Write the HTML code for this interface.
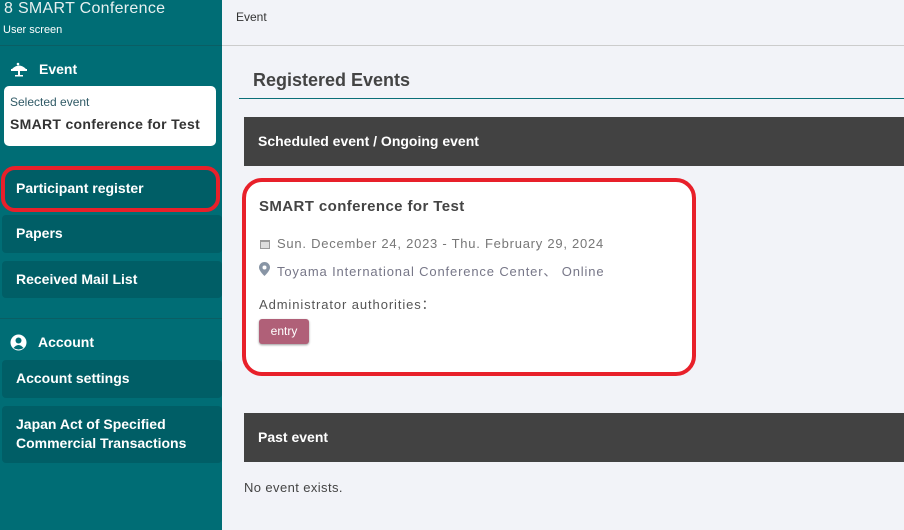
<!DOCTYPE html>
<html><head><meta charset="utf-8"><style>
*{box-sizing:border-box;margin:0;padding:0}
body{width:904px;height:530px;overflow:hidden;font-family:"Liberation Sans",sans-serif;background:#f2f3f8;position:relative}
.sb{position:absolute;left:0;top:0;width:222px;height:530px;background:#006d75;color:#fff}
.abs{position:absolute}
.item{position:absolute;left:2px;width:220px;background:#005e66;border-radius:4px;font-weight:bold;font-size:14px;padding-left:14px;color:#fff}
.main{position:absolute;left:222px;top:0;right:0;bottom:0}
.bar{position:absolute;left:22px;right:0;background:#424242;color:#fff;font-weight:bold;font-size:14px;padding-left:14px}
.card .t{letter-spacing:0.75px}
</style></head><body>
<div class="sb">
 <div class="abs" style="left:4px;top:0;font-size:16px;color:#e6f0f0;letter-spacing:0.3px">8 SMART Conference</div>
 <div class="abs" style="left:3px;top:24px;font-size:11px">User screen</div>
 <div class="abs" style="left:0;top:45px;width:222px;border-top:1px solid #0a5e64"></div>
 <svg class="abs" style="left:10px;top:61px" width="18" height="16" viewBox="0 0 18 16"><path d="M2 8 Q9 1 16 8Z" fill="#fff"/><rect x="1" y="8" width="16" height="2" fill="#fff"/><rect x="8" y="10" width="2" height="4" fill="#fff"/><rect x="5" y="14" width="8" height="1.5" fill="#fff"/><circle cx="8" cy="3" r="1.3" fill="#fff"/></svg>
 <div class="abs" style="left:39px;top:61px;font-size:14px;font-weight:bold">Event</div>
 <div class="abs" style="left:4px;top:86px;width:212px;height:60px;background:#fff;border-radius:5px;color:#2a4a55">
  <div style="position:absolute;left:6px;top:9px;font-size:12px;color:#305a66">Selected event</div>
  <div style="position:absolute;left:6px;top:30px;font-size:14px;font-weight:bold;color:#333;letter-spacing:0.3px">SMART conference for Test</div>
 </div>
 <div class="item" style="top:166px;height:46px;line-height:36px;border:4px solid #e8202a;border-radius:14px;left:1px;width:219px;padding-left:11px">Participant register</div>
 <div class="item" style="top:215px;height:38px;line-height:36px">Papers</div>
 <div class="item" style="top:261px;height:37px;line-height:36px">Received Mail List</div>
 <div class="abs" style="left:0;top:318px;width:222px;border-top:1px solid #0a5e64"></div>
 <svg class="abs" style="left:10px;top:334px" width="17" height="17" viewBox="0 0 17 17"><circle cx="8.5" cy="8.5" r="8" fill="#fff"/><circle cx="8.5" cy="6.5" r="3" fill="#006d75"/><path d="M3.5 14 Q8.5 8 13.5 14 Q8.5 17 3.5 14Z" fill="#006d75"/></svg>
 <div class="abs" style="left:38px;top:334px;font-size:14px;font-weight:bold">Account</div>
 <div class="item" style="top:360px;height:38px;line-height:36px">Account settings</div>
 <div class="item" style="top:406px;height:57px;padding-top:9px;line-height:19px">Japan Act of Specified<br>Commercial Transactions</div>
</div>
<div class="main">
 <div class="abs" style="left:14px;top:10px;font-size:12px;color:#333">Event</div>
 <div class="abs" style="left:0;top:45px;right:0;border-top:1px solid #ccc"></div>
 <div class="abs" style="left:31px;top:70px;font-size:18px;font-weight:bold;color:#444">Registered Events</div>
 <div class="abs" style="left:17px;top:98px;right:0;border-top:1px solid #0b6f78"></div>
 <div class="bar" style="top:117px;height:49px;line-height:49px">Scheduled event / Ongoing event</div>
 <div class="abs card" style="left:20px;top:178px;width:454px;height:198px;background:#fff;border:4px solid #e8202a;border-radius:20px">
  <div class="abs" style="left:13px;top:16px;font-size:15px;font-weight:bold;color:#444;letter-spacing:0.4px">SMART conference for Test</div>
  <svg class="abs" style="left:14px;top:57px" width="10" height="10"><rect x="0" y="1" width="10" height="9" fill="#999"/><rect x="1" y="3" width="8" height="6" fill="#ddd"/></svg>
  <div class="abs t" style="left:31px;top:54px;font-size:13px;color:#777">Sun. December 24, 2023 - Thu. February 29, 2024</div>
  <svg class="abs" style="left:13px;top:80px" width="11" height="14" viewBox="0 0 11 14"><path d="M5.5 0A5.5 5.5 0 0 0 0 5.5C0 9 5.5 14 5.5 14S11 9 11 5.5A5.5 5.5 0 0 0 5.5 0Z" fill="#8895a5"/><circle cx="5.5" cy="5.5" r="2" fill="#fff"/></svg>
  <div class="abs t" style="left:31px;top:79px;font-size:13px;color:#778;letter-spacing:0.85px">Toyama International Conference Center、 Online</div>
  <div class="abs t" style="left:13px;top:112px;font-size:13px;color:#555;letter-spacing:0.9px">Administrator authorities：</div>
  <div class="abs" style="left:13px;top:137px;width:50px;height:25px;background:#b06078;border-radius:3px;color:#fff;font-size:12px;text-align:center;line-height:24px;box-shadow:0 1px 2px #999">entry</div>
 </div>
 <div class="bar" style="top:413px;height:49px;line-height:49px">Past event</div>
 <div class="abs" style="left:22px;top:480px;font-size:13px;color:#444;letter-spacing:0.4px">No event exists.</div>
</div>
</body></html>
